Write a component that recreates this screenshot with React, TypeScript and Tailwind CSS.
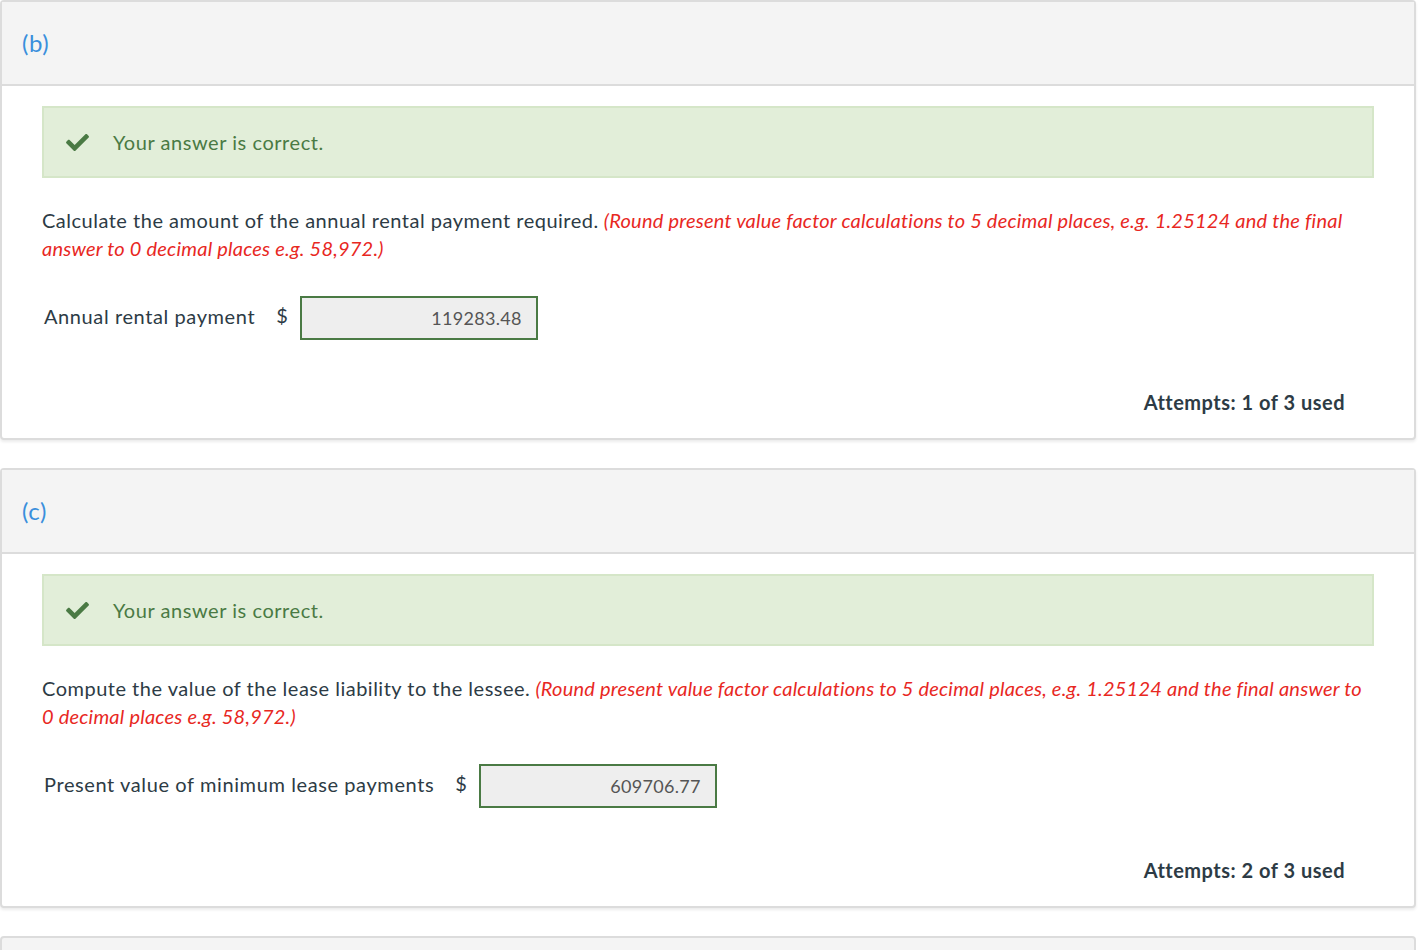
import { FaCheck } from "react-icons/fa";

type Part = {
  label: string;
  prompt: string;
  hint: string;
  field: string;
  value: string;
  attempts: string;
};

const parts: Part[] = [
  {
    label: "(b)",
    prompt: "Calculate the amount of the annual rental payment required.",
    hint: "(Round present value factor calculations to 5 decimal places, e.g. 1.25124 and the final answer to 0 decimal places e.g. 58,972.)",
    field: "Annual rental payment",
    value: "119283.48",
    attempts: "Attempts: 1 of 3 used",
  },
  {
    label: "(c)",
    prompt: "Compute the value of the lease liability to the lessee.",
    hint: "(Round present value factor calculations to 5 decimal places, e.g. 1.25124 and the final answer to 0 decimal places e.g. 58,972.)",
    field: "Present value of minimum lease payments",
    value: "609706.77",
    attempts: "Attempts: 2 of 3 used",
  },
];

function PartCard({ part }: { part: Part }) {
  return (
    <div className="w-[1416px] rounded-[4px] border-2 border-[#dcdcdc] bg-white shadow-[0_2px_3px_rgba(0,0,0,0.08)]">
      <div className="flex h-[84px] items-center border-b-2 border-[#dcdcdc] bg-[#f4f4f4] px-[20px]">
        <span className="text-[24px] tracking-[0.6px] text-[#3a8fdc]">{part.label}</span>
      </div>
      <div className="pl-[40px] pr-[40px] pt-[20px] pb-[22px]">
        <div className="flex h-[72px] items-center border-2 border-[#d5e6c8] bg-[#e2eed9] pl-[20px]">
          <FaCheck className="h-[23px] w-[27px] text-[#4a7a44]" />
          <span className="ml-[22px] text-[20px] tracking-[0.55px] text-[#4a7a44]">
            Your answer is correct.
          </span>
        </div>
        <p className="mt-[28px] pr-[8px] text-[20px] leading-[28px] text-[#2d3b45]">
          <span className="tracking-[0.5px]">{part.prompt}</span>{" "}
          <i className="tracking-[0.22px] text-[#e8281f]">{part.hint}</i>
        </p>
        <div className="mt-[34px] flex items-center pl-[2px]">
          <span className="-translate-y-[2px] text-[20px] tracking-[0.6px] text-[#2d3b45]">{part.field}</span>
          <span className="ml-[21px] -translate-y-[3px] text-[20px] text-[#2d3b45]">$</span>
          <div className="ml-[12px] flex h-[44px] w-[238px] items-center justify-end border-2 border-[#4a7a44] bg-[#eeeeee] pr-[14px]">
            <span className="text-[18px] tracking-[0.3px] text-[#555]">{part.value}</span>
          </div>
        </div>
        <div className="mt-[48px] flex justify-end pr-[29px]">
          <span className="text-[20px] font-bold leading-[28px] tracking-[0.5px] text-[#2d3b45]">
            {part.attempts}
          </span>
        </div>
      </div>
    </div>
  );
}

export default function App() {
  return (
    <div
      className="h-[950px] overflow-hidden bg-white"
      style={{ fontFamily: "Lato, 'Open Sans', sans-serif" }}
    >
      <div className="flex flex-col gap-[28px]">
        {parts.map((p) => (
          <PartCard key={p.label} part={p} />
        ))}
        <div className="h-[40px] w-[1416px] rounded-[4px] border-2 border-[#dcdcdc] bg-[#f4f4f4]" />
      </div>
    </div>
  );
}
